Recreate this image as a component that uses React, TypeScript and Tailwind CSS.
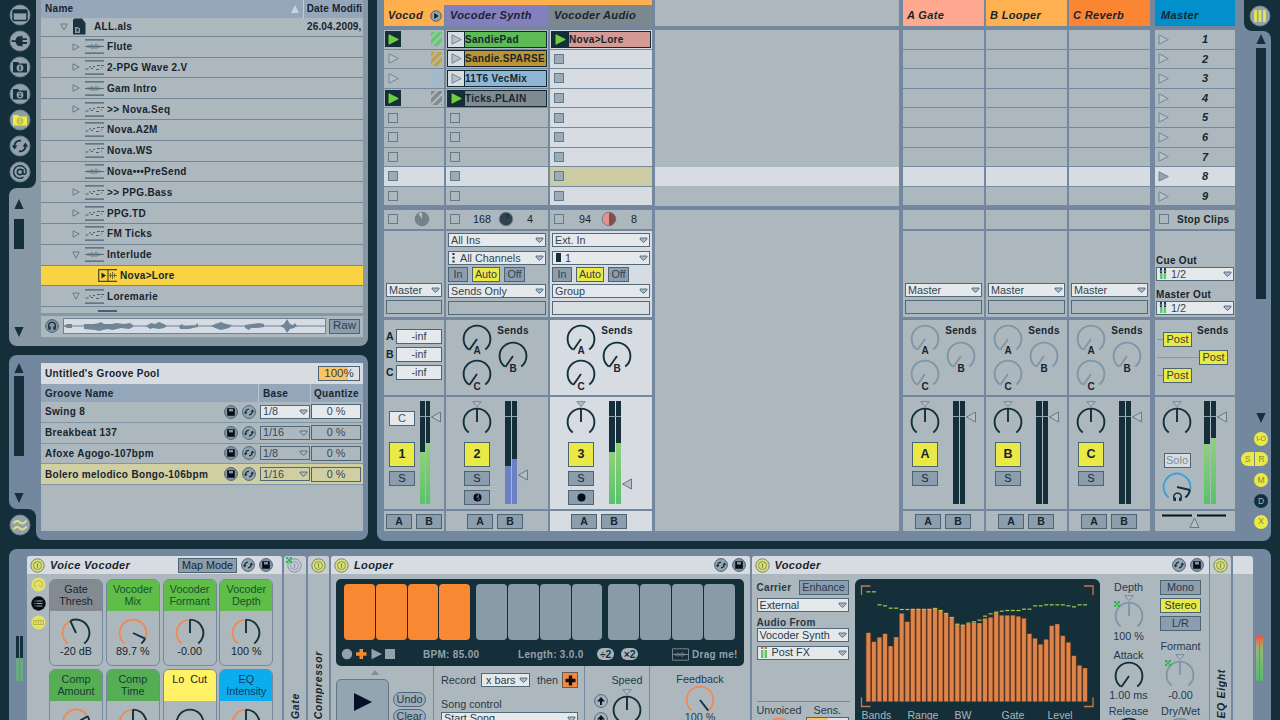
import React from "react";

type Kids = { children?: React.ReactNode; className?: string };

const INK = "#14303c";

/* ---------- shared drawing helpers ---------- */

function polar(c: number, r: number, deg: number) {
  const a = ((deg - 90) * Math.PI) / 180;
  return [c + r * Math.cos(a), c + r * Math.sin(a)];
}

function arcPath(c: number, r: number, from: number, to: number) {
  const [x0, y0] = polar(c, r, from);
  const [x1, y1] = polar(c, r, to);
  return `M${x0} ${y0}A${r} ${r} 0 ${to - from > 180 ? 1 : 0} 1 ${x1} ${y1}`;
}

function Knob({
  angle = -145,
  color = INK,
  fill,
  size = 30,
  reach = 13.4,
  rest,
}: {
  angle?: number;
  color?: string;
  fill?: string;
  size?: number;
  reach?: number;
  rest?: string;
}) {
  const [px, py] = polar(15, reach, angle);
  return (
    <svg width={size} height={size} viewBox="0 0 30 30" className="block shrink-0" fill="none" strokeWidth="1.9">
      {fill ? (
        <>
          <path d={arcPath(15, 13.4, -142, angle)} stroke={fill} />
          <path d={arcPath(15, 13.4, angle, 142)} stroke={rest || color} />
        </>
      ) : (
        <path d={arcPath(15, 13.4, -142, 142)} stroke={color} />
      )}
      <path d={`M15 15L${px} ${py}`} stroke={color} />
    </svg>
  );
}

function Caret() {
  return (
    <svg width="9" height="6" viewBox="0 0 9 6" className="block shrink-0">
      <path d="M1 1h7v1.2L4.9 5.2h-.8L1 2.2z" fill="#a9b8c6" stroke="#4f6a7e" strokeWidth=".9" />
    </svg>
  );
}

function Select({ children, className = "", icon, plain }: Kids & { icon?: React.ReactNode; plain?: boolean }) {
  return (
    <div
      className={`flex h-[14px] shrink-0 items-center justify-between border border-[#52697a] pl-[2px] pr-[1px] text-[10.8px] leading-none whitespace-nowrap ${plain ? "" : "bg-[#e6e9ec]"} ${className}`}
    >
      <span className="flex items-center gap-[4px]">
        {icon}
        {children}
      </span>
      <Caret />
    </div>
  );
}

function Btn({ children, className = "" }: Kids) {
  return (
    <div
      className={`flex h-[15px] shrink-0 items-center justify-center border border-[#4d6475] leading-none whitespace-nowrap ${className}`}
    >
      {children}
    </div>
  );
}

function Tri({ dir, className = "" }: { dir: "up" | "down"; className?: string }) {
  return (
    <svg width="10" height="10" viewBox="0 0 10 10" className={`block shrink-0 ${className}`}>
      <path d={dir === "up" ? "M5 0L9.6 10H.4z" : "M.4 0h9.2L5 10z"} fill={INK} />
    </svg>
  );
}

function Disc() {
  return (
    <svg width="14" height="14" viewBox="0 0 14 14" className="block shrink-0">
      <circle cx="7" cy="7" r="6.4" fill="#8496a5" stroke="#4e6271" />
      <path d="M3.2 3.2h7l.6.6v7H3.2z" fill="#060d14" />
      <path d="M5 4h4v2.4H5z" fill="#8496a5" />
    </svg>
  );
}

function Swap() {
  return (
    <svg width="14" height="14" viewBox="0 0 14 14" className="block shrink-0">
      <circle cx="7" cy="7" r="6.4" fill="#94a5b2" stroke="#4e6271" />
      <path d="M3.6 8.2C3.6 5.6 5 4.4 7 4.2M10.4 5.8C10.4 8.4 9 9.6 7 9.8" fill="none" stroke={INK} strokeWidth="1.3" />
      <path d="M1.8 7.2h3.6L3.6 9.6zM8.600 6.8h3.6L10.400 4.400z" fill={INK} />
    </svg>
  );
}

function Power({ off }: { off?: boolean }) {
  return (
    <svg width="15" height="15" viewBox="0 0 15 15" className="block shrink-0">
      <circle cx="7.500" cy="7.500" r="6.700" fill={off ? "#c3ccd3" : "#d6de7e"} stroke={off ? "#8795a0" : "#78866a"} />
      <circle cx="7.500" cy="7.500" r="4" fill="none" stroke={off ? "#8e9ca8" : "#8c9646"} strokeWidth="1" />
      <path d="M7.500 5.200v4.600" stroke={off ? "#8e9ca8" : "#8c9646"} strokeWidth="1.300" />
    </svg>
  );
}

function GreenMark() {
  return (
    <svg width="6" height="6" viewBox="0 0 6 6" className="block">
      <path d="M0 0h2.300v2.300H0zM3.700 0H6v2.300H3.700zM0 3.700h2.300V6H0zM3.700 3.700H6V6H3.700zM2 2h2v2H2z" fill="#2fb452" />
    </svg>
  );
}

/* ---------- browser ---------- */

function RoundIcon({ kind }: { kind: string }) {
  const hot = kind === "f3";
  return (
    <svg width="22" height="22" viewBox="0 0 22 22" className="block">
      <circle cx="11" cy="11" r="10" fill={hot ? "#8da0a0" : "#93a1ab"} stroke="#6f8290" />
      {kind === "box" && (
        <g fill="none" stroke={INK}>
          <rect x="4" y="6" width="14" height="10.500" rx="1.500" strokeWidth="1.500" />
          <path d="M4 7.800h14" strokeWidth="3.200" />
        </g>
      )}
      {kind === "plug" && (
        <path d="M2.500 10.300h4C7 7.800 8.500 6.300 10 6.300h2.300V5.800h1.200v2.500H18v1.800h-4.500v2H18v1.800h-4.500v2.600h-1.200v-.6H10C8.500 15.900 7 14.200 6.500 11.900h-4z" fill={INK} />
      )}
      {kind[0] === "f" && (
        <>
          <path d="M4 6h5l1.200 1.500H18V16.500H4z" fill={hot ? "#f0ec3e" : INK} />
          <circle cx="11" cy="12" r="3.400" fill={hot ? "#b5bb55" : "#93a1ab"} />
          {kind === "f1" ? (
            <path d="M11 9.800v4.400" stroke={INK} strokeWidth="1.400" />
          ) : (
            <path d="M9.600 10.600c1.400-1 2.800 0 2.200 1L9.800 13.400h2.600" fill="none" stroke={hot ? "#e6e26a" : INK} />
          )}
        </>
      )}
      {kind === "sync" && (
        <>
          <path d="M5.600 12C4.800 8 8 5 12 5.800M16.400 10C17.200 14 14 17 10 16.200" fill="none" stroke={INK} strokeWidth="1.900" />
          <path d="M2.800 10.500h5.700L5.600 14.500zM13.500 11.500h5.700L16.400 7.500z" fill={INK} />
        </>
      )}
      {kind === "at" && (
        <g fill="none" stroke={INK} strokeWidth="1.400">
          <circle cx="11" cy="11" r="2.700" />
          <path d="M13.800 8v4.300c.5 1.900 3.400 1.200 3.400-1.600A6.300 6.300 0 1 0 14.500 16.200" />
        </g>
      )}
      {kind === "wave" && (
        <g fill="none" stroke="#dfe37c" strokeWidth="2">
          <path d="M4.500 9.500C7 5.500 9.500 7 11 8.500s4 2 6.500-2" />
          <path d="M4.500 15.500C7 11.500 9.500 13 11 14.500s4 2 6.500-2" />
        </g>
      )}
      {kind === "bars" && <path d="M6.500 5v12M11 5v12M15.500 5v12" stroke="#dde35e" strokeWidth="3" />}
    </svg>
  );
}

function TrackIcon({ audio }: { audio?: boolean }) {
  return (
    <svg width="19" height="15" viewBox="0 0 19 15" className="block shrink-0">
      <path d="M0 .9h19M0 14.100h19" stroke="#4a6070" strokeWidth="1.300" />
      {audio ? (
        <path d="M0 7.500h19M3 6.200v2.600M5 6v3M7 5v5M9 6v3.500M11 4.500v5.500M13 6v3M15 6.500v2" stroke="#566b7b" fill="none" />
      ) : (
        <path d="M.5 9h3M4 7h2M6 8.500h2M8 6.500h2M11 9.500h3M12 5.500h3M16 5.500h3M16 8h1" stroke="#4a6070" strokeWidth="1.200" fill="none" />
      )}
    </svg>
  );
}

function Fold({ open }: { open?: boolean }) {
  return (
    <svg width="8" height="8" viewBox="0 0 8 8" className="block shrink-0">
      <path d={open ? "M.8 1h6.400L4 7.200z" : "M1 .8v6.400L7.200 4z"} fill="none" stroke="#6a7b88" />
    </svg>
  );
}

const tree: { name: string; fold?: "open" | "shut"; audio?: boolean }[] = [
  { name: "Flute", fold: "shut", audio: true },
  { name: "2-PPG Wave 2.V", fold: "shut" },
  { name: "Gam Intro", fold: "shut", audio: true },
  { name: ">> Nova.Seq", fold: "shut" },
  { name: "Nova.A2M" },
  { name: "Nova.WS" },
  { name: "Nova•••PreSend", audio: true },
  { name: ">> PPG.Bass", fold: "shut" },
  { name: "PPG.TD", fold: "shut" },
  { name: "FM Ticks", fold: "shut" },
  { name: "Interlude", fold: "open", audio: true },
  { name: "Nova>Lore" },
  { name: "Loremarie", fold: "open" },
];

function Browser() {
  return (
    <div className="flex h-[346px] w-[368px] overflow-hidden rounded-br-lg bg-[#8798a4]">
      <div className="flex w-[36px] flex-col">
        <div className="flex h-[188px] flex-col items-center gap-[4.2px] rounded-br-lg bg-[#142f39] pt-[4px] pl-[4px]">
          {["box", "plug", "f1", "f2", "f3", "sync", "at"].map((k) => (
            <RoundIcon key={k} kind={k} />
          ))}
        </div>
        <div className="flex-1 bg-[#142f39] pl-[9px]">
          <div className="flex h-full flex-col items-start rounded-l-lg bg-[#8798a4] pt-[11px] pb-[9px] pl-[5px]">
            <Tri dir="up" />
            <div className="mt-[10px] h-[30px] w-[10px] bg-[#142f39]" />
            <Tri dir="down" className="mt-auto" />
          </div>
        </div>
      </div>
      <div className="ml-[5px] flex w-[322px] flex-col text-[10px] font-bold tracking-[0.3px]">
        <div className="flex h-[17.600px] shrink-0 items-center bg-[#94a7ba] pl-[4px]">
          <span className="w-[249px]">Name</span>
          <svg width="8" height="8" viewBox="0 0 8 8" className="mr-[4px] shrink-0">
            <path d="M4 0l4 8H0z" fill="#cbd3da" />
          </svg>
          <span className="flex h-full w-[61px] items-center border-l border-[#c3ccd4] pl-[3px] tracking-[0.150px] whitespace-nowrap">Date Modifi</span>
        </div>
        <div className="flex h-[295px] shrink-0 flex-col overflow-hidden bg-[#adb8be]">
          <div className="flex h-[19.200px] shrink-0 items-center border-b border-[#718799] pl-[19px]">
            <Fold open />
            <svg width="14" height="17" viewBox="0 0 14 17" className="ml-[4px] shrink-0">
              <path d="M1 2Q1 .5 3 .5H10L13.500 5V16.500H1z" fill="#1b3240" />
              <path d="M3 9h3l1 1h1v5H3z" fill="#8b9aa3" />
              <path d="M4.500 10.500h2v3h-2z" fill="#1b3240" />
            </svg>
            <span className="ml-[8px] w-[213px]">ALL.als</span>
            <span className="tracking-[0.150px] whitespace-nowrap">26.04.2009,</span>
          </div>
          {tree.map((r) =>
            r.name === "Nova>Lore" ? (
              <div key={r.name} className="flex h-[20.800px] shrink-0 items-center border-b border-[#718799] bg-[#f9d342] pl-[57px]">
                <svg width="19" height="13" viewBox="0 0 19 13" className="shrink-0">
                  <path d="M19 .7H.7v11.600H19M10 .7v11.600" fill="none" stroke="#4b4a20" strokeWidth="1.200" />
                  <path d="M3.500 3.500v6L8 6.500z" fill="#26261a" />
                  <path d="M10 6.500h9M12.500 4v5M14.500 3v7M16.500 4.500v4" stroke="#6d6a2c" />
                </svg>
                <span className="ml-[3px]">{r.name}</span>
              </div>
            ) : (
              <div key={r.name} className="flex h-[20.800px] shrink-0 items-center border-b border-[#718799] pl-[31px]">
                <span className="w-[13px]">{r.fold && <Fold open={r.fold === "open"} />}</span>
                <TrackIcon audio={r.audio} />
                <span className="ml-[3px] whitespace-pre">{r.name}</span>
              </div>
            ),
          )}
          <div className="ml-[57px] mt-[3px] h-[2px] w-[19px] shrink-0 bg-[#4a5f6e]" />
        </div>
        <div className="mt-[3px] flex h-[21px] shrink-0 items-center bg-[#adb8be] pl-[4px] font-normal">
          <svg width="14" height="14" viewBox="0 0 14 14" className="shrink-0">
            <circle cx="7" cy="7" r="6.400" fill="#8496a5" stroke="#4e6271" />
            <path d="M4.400 10.500C2 6 4.500 3.200 7 3.200S12 6 9.600 10.500" fill="none" stroke={INK} strokeWidth="1.300" />
            <path d="M3.600 7.500h2v3.300h-2zM8.400 7.500h2v3.300h-2z" fill={INK} />
          </svg>
          <div className="ml-[4px] h-[16px] w-[263px] border border-[#6d8294] bg-[#d6dce3]">
            <svg width="261" height="14" viewBox="0 0 261 14">
              <path d="M0 7H261" stroke="#6a8093" />
              <path
                d="M0 7l3-2h5v4H3zM20 5h10l5-1 2-1 3 2h8l4-1 8 1 6-1 3 2v2l-4 2-8-1-8 2-6-1-8 2-4-1-11-1zM82 7l5-3 4 1 4-2 5 2 3 2-3 2-5 1-6-1-3 1zM115 7l3-2 2 2h6l2-1 2 1 4-3v4l-5 1-4 1h-9zM147 7l4-2 6-2 5 2 6 1-3 3-8 2-6-2zM181 6l6-1 8-1 5 1v3l-7 1h-6l-2 2-4-2zM216 7l4-2 3-5 3 5 3 1 2-2 2 3-3 2-4 1-3 4-3-5z"
                fill="#6f8598"
              />
            </svg>
          </div>
          <Btn className="ml-[3px] w-[31px] bg-[#8b9cac] text-[11.500px] tracking-normal text-[#2b3f4c]">Raw</Btn>
        </div>
      </div>
    </div>
  );
}

const grooves = [
  ["Swing 8", "1/8"],
  ["Breakbeat 137", "1/16"],
  ["Afoxe Agogo-107bpm", "1/8"],
  ["Bolero melodico Bongo-106bpm", "1/16"],
];

function GroovePool() {
  return (
    <div className="mt-[9px] flex h-[185px] w-[368px]">
      <div className="flex w-[36px] flex-col bg-[#73889e]">
        <div className="bg-[#142f39] pl-[9px]">
          <div className="flex h-[154px] flex-col items-start rounded-l-lg bg-[#73889e] pt-[8px] pb-[6px] pl-[5px]">
            <Tri dir="up" />
            <div className="mt-[3px] h-[80px] w-[10px] bg-[#142f39]" />
            <Tri dir="down" className="mt-auto" />
          </div>
        </div>
        <div className="flex flex-1 items-center justify-center rounded-tr-lg bg-[#142f39] pl-[4px]">
          <RoundIcon kind="wave" />
        </div>
      </div>
      <div className="flex w-[332px] flex-col rounded-r-lg rounded-bl-lg bg-[#73889e] pt-[8px] pr-[5px] pb-[9px] pl-[5px]">
        <div className="flex flex-1 flex-col bg-[#adb8be] text-[10px] font-bold tracking-[0.330px]">
          <div className="flex h-[21px] shrink-0 items-center justify-between bg-[#d8dce1] pr-[3px] pl-[4px]">
            <span>Untitled's Groove Pool</span>
            <Btn className="h-[14px] w-[42px] bg-linear-to-r from-[#fbc462] from-72% to-[#dfe3e8] to-72% text-[11.500px] font-normal tracking-normal text-[#3c4043]">
              100%
            </Btn>
          </div>
          <div className="flex h-[18px] shrink-0 items-center bg-[#94a7ba]">
            <span className="w-[217px] pl-[4px]">Groove Name</span>
            <span className="flex h-full w-[52px] items-center border-l border-[#b6c2cc] pl-[4px]">Base</span>
            <span className="flex h-full items-center border-l border-[#b6c2cc] pl-[3px]">Quantize</span>
          </div>
          {grooves.map(([n, b], i) => (
            <div
              key={n}
              className={`flex h-[20.800px] shrink-0 items-center border-b border-[#8095a6] pl-[4px] ${i === 3 ? "bg-[#d0cfa4]" : ""}`}
            >
              <span className="w-[179px] whitespace-nowrap">{n}</span>
              <Disc />
              <span className="w-[4px]" />
              <Swap />
              <Select plain={i > 0} className="ml-[4px] w-[50px] font-normal tracking-normal text-[#354855]">
                {b}
              </Select>
              <Btn className={`ml-[1px] h-[14px] w-[50px] text-[10.800px] font-normal tracking-normal text-[#354855] ${i ? "" : "bg-[#e6e9ec]"}`}>0 %</Btn>
            </div>
          ))}
        </div>
      </div>
    </div>
  );
}

/* ---------- session view ---------- */

function Stop({ solid }: { solid?: boolean }) {
  return <div className={`h-[10px] w-[10px] shrink-0 border border-[#637a8c] ${solid ? "bg-[#9dabb7]" : ""}`} />;
}

function Play({ on, box, solid }: { on?: boolean; box?: boolean; solid?: boolean }) {
  return (
    <div className={`flex h-full w-[16px] shrink-0 items-center justify-center ${on ? "bg-[#142f39]" : box ? "bg-[#d7dde3]" : ""}`}>
      <svg width="11" height="11" viewBox="0 0 11 11">
        <path d="M1 .8v9.400L10.300 5.500z" fill={on ? "#6fce3e" : solid ? "#94a5b0" : "#b4bfc6"} stroke={on ? "#6fce3e" : "#71879a"} />
      </svg>
    </div>
  );
}

function Slots({ render, className = "" }: { render?: (i: number) => React.ReactNode; className?: string }) {
  return (
    <div className={`mt-[4px] flex h-[176.400px] shrink-0 flex-col ${className}`}>
      {Array.from({ length: 9 }, (_, i) => (
        <div key={i} className={`flex h-[19.600px] shrink-0 items-center border-b border-[#73899d] ${i === 7 ? "bg-[#d7dce2]" : ""}`}>
          {render ? render(i) : null}
        </div>
      ))}
    </div>
  );
}

function Clip({ name, color, on }: { name: string; color: string; on?: boolean }) {
  return (
    <div className={`ml-[1px] flex h-[17px] w-[100px] items-center overflow-hidden border border-[#142936] ${color}`}>
      <Play on={on} box />
      <span className="border-l border-[#142936] text-[10px] leading-[15px] font-bold tracking-[0.300px] whitespace-nowrap">{name}</span>
    </div>
  );
}

function Pie({ base, wedge, d }: { base: string; wedge: string; d: string }) {
  return (
    <svg width="16" height="16" viewBox="0 0 16 16" className="shrink-0">
      <circle cx="8" cy="8" r="6.800" fill={base} stroke="#6f7f89" />
      <path d={d} fill={wedge} />
    </svg>
  );
}

function Meter({ w, levels, color, fader }: { w: string; levels: [number, number]; color: string; fader: number }) {
  return (
    <div className="flex h-[103px]">
      <div className="relative flex gap-[1px]">
        {levels.map((l, i) => (
          <div key={i} className={`flex h-[103px] flex-col justify-end bg-[#142f39] ${w}`}>
            <div className={color} style={{ height: l }} />
          </div>
        ))}
        <div className="absolute top-[15px] h-[1px] w-full bg-[#8da0ae]" />
      </div>
      <svg width="12" height="12" viewBox="0 0 12 12" className="block" style={{ marginTop: fader - 6 }}>
        <path d="M1.500 6L10.500 1v10z" fill="#b4bfc7" stroke="#66788a" />
      </svg>
    </div>
  );
}

function Pan() {
  return (
    <div className="flex h-[37px] shrink-0 flex-col items-center">
      <svg width="10" height="6" viewBox="0 0 10 6" className="block shrink-0">
        <path d="M.8.700h8.400L5 5.600z" fill="#b4bfc7" stroke="#71879a" />
      </svg>
      <Knob angle={0} />
    </div>
  );
}

function LabelledKnob({ label, color, className = "" }: { label: string; color: string; className?: string }) {
  return (
    <div className={`relative h-[30px] w-[30px] ${className}`}>
      <Knob color={color} />
      <span className="absolute inset-x-0 top-[22.500px] text-center text-[10px] leading-[10px] font-bold">{label}</span>
    </div>
  );
}

function SendsBlock({ color, pad }: { color: string; pad: string }) {
  return (
    <div className={`flex gap-[4px] pt-[4px] ${pad}`}>
      <div className="flex flex-col gap-[5.500px]">
        <LabelledKnob label="A" color={color} />
        <LabelledKnob label="C" color={color} />
      </div>
      <div className="flex w-[34px] flex-col items-center">
        <span className="mt-[2px] text-[10px] leading-[10px] font-bold tracking-[0.300px]">Sends</span>
        <LabelledKnob label="B" color={color} className="mt-[5.500px]" />
      </div>
    </div>
  );
}

function Pair({ className = "" }: { className?: string }) {
  return (
    <div className={`flex gap-[4px] pt-[3px] text-[10.500px] font-bold ${className}`}>
      <Btn className="w-[26px] bg-[#8c9dae]">A</Btn>
      <Btn className="w-[26px] bg-[#8c9dae]">B</Btn>
    </div>
  );
}

function Strip({
  w,
  bg = "bg-[#adb8be]",
  head,
  slots,
  status,
  io,
  sends,
  mix,
  foot,
}: {
  w: string;
  bg?: string;
  head: React.ReactNode;
  slots: React.ReactNode;
  status?: React.ReactNode;
  io?: React.ReactNode;
  sends?: React.ReactNode;
  mix?: React.ReactNode;
  foot?: React.ReactNode;
}) {
  return (
    <div className={`flex shrink-0 flex-col ${w}`}>
      {head}
      {slots}
      <div className="mt-[3.600px] flex h-[19px] shrink-0 items-center bg-[#adb8be]">{status}</div>
      <div className={`mt-[2px] h-[86px] shrink-0 ${bg}`}>{io}</div>
      <div className={`mt-[3px] h-[75px] shrink-0 ${bg}`}>{sends}</div>
      <div className={`mt-[2px] h-[112px] shrink-0 ${bg}`}>{mix}</div>
      <div className={`mt-[2px] h-[20px] shrink-0 ${bg}`}>{foot}</div>
    </div>
  );
}

const headText = "flex items-center text-[11px] font-bold italic tracking-[0.350px] whitespace-nowrap";

function TrackMix({ n, levels, color, fader, midi }: { n: string; levels: [number, number]; color: string; fader: number; midi?: boolean }) {
  return (
    <div className="flex pt-[4px]">
      <div className="ml-[15px] flex w-[32px] flex-col items-center">
        <Pan />
        <Btn className="mt-[4px] h-[25px] w-[26px] bg-[#eae945] text-[12.500px] font-bold">{n}</Btn>
        <Btn className="mt-[4px] w-[26px] bg-[#8c9dae] text-[11px]">S</Btn>
        <Btn className="mt-[4px] w-[26px] bg-[#8c9dae]">
          <svg width="9" height="9" viewBox="0 0 9 9">
            <circle cx="4.500" cy="4.500" r="4" fill="#060d18" />
            {midi && <path d="M5.200 1.200v3H3.600M6.500 5.200L4.600 7.200" stroke="#8c9dae" fill="none" />}
          </svg>
        </Btn>
      </div>
      <div className="ml-[12px]">
        <Meter w="w-[5.500px]" levels={levels} color={color} fader={fader} />
      </div>
    </div>
  );
}

function TrackIO({ a, b, icon, out, light }: { a: string; b: string; icon: React.ReactNode; out: string; light?: boolean }) {
  return (
    <div className="flex flex-col px-[2px] pt-[2px] text-[#31444f]">
      <Select>{a}</Select>
      <Select className="mt-[4px]" icon={icon}>
        {b}
      </Select>
      <div className="mt-[2px] flex gap-[4px] text-[10.800px]">
        <Btn className="h-[14px] w-[20px] bg-[#8c9dae]">In</Btn>
        <Btn className="h-[14px] w-[28px] bg-[#eae945]">Auto</Btn>
        <Btn className="h-[14px] w-[21px] bg-[#8c9dae]">Off</Btn>
      </div>
      <Select className="mt-[2px]">{out}</Select>
      <div className={`mt-[3px] h-[14px] border border-[#52697a] ${light ? "bg-[#d9dee3]" : ""}`} />
    </div>
  );
}

function Return({ name, letter, color, last }: { name: string; letter: string; color: string; last?: boolean }) {
  return (
    <Strip
      w={last ? "w-[81px] mr-[5px]" : "w-[81px] mr-[2px]"}
      head={<div className={`h-[26px] shrink-0 pt-[5px] pl-[4px] ${headText} ${color}`}>{name}</div>}
      slots={<Slots className="bg-[#adb8be]" />}
      io={
        <div className="px-[2px] pt-[52px] text-[#31444f]">
          <Select>Master</Select>
          <div className="mt-[3px] h-[14px] border border-[#52697a]" />
        </div>
      }
      sends={<SendsBlock color="#8095a8" pad="pl-[7px]" />}
      mix={
        <div className="flex pt-[4px]">
          <div className="ml-[6px] flex w-[32px] flex-col items-center">
            <Pan />
            <Btn className="mt-[4px] h-[25px] w-[26px] bg-[#eae945] text-[12.500px] font-bold">{letter}</Btn>
            <Btn className="mt-[4px] w-[26px] bg-[#8c9dae] text-[11px]">S</Btn>
          </div>
          <div className="ml-[12px]">
            <Meter w="w-[5.500px]" levels={[0, 0]} color="" fader={16} />
          </div>
        </div>
      }
      foot={<Pair className="pl-[12px]" />}
    />
  );
}

function MiniMeter() {
  return (
    <svg width="8" height="11" viewBox="0 0 8 11" className="shrink-0">
      <path d="M1 0h2v5H1zM5 0h2v5H5z" fill="#22394a" />
      <path d="M1 5h2.500v6H1zM4.600 5h2.500v6H4.600z" fill="#62c56c" />
      <path d="M0 3h8" stroke="#9fb0ba" strokeWidth=".8" />
    </svg>
  );
}

const stripes = [
  "bg-[repeating-linear-gradient(135deg,#67c873_0_3px,#adb8be_3px_5.600px)]",
  "bg-[repeating-linear-gradient(135deg,#c3a24b_0_3px,#adb8be_3px_5.600px)]",
  "bg-[repeating-linear-gradient(135deg,#93bcdb_0_3px,#adb8be_3px_5.600px)]",
  "bg-[repeating-linear-gradient(135deg,#828b8f_0_3px,#adb8be_3px_5.600px)]",
];

const synthClips = [
  ["SandiePad", "bg-[#5cbb55]"],
  ["Sandie.SPARSE", "bg-[#bd942f]"],
  ["11T6 VecMix", "bg-[#8fb6d5]"],
  ["Ticks.PLAIN", "bg-[#808b91]"],
];

function Session() {
  return (
    <div className="flex h-[541px] w-[858px] rounded-bl-lg bg-[#73889e] pl-[7px]">
      <Strip
        w="w-[60px]"
        head={
          <div className={`h-[26px] shrink-0 bg-[#ffaf4d] pt-[5px] pl-[4px] ${headText}`}>
            <span className="w-[42px]">Vocod</span>
            <svg width="12" height="12" viewBox="0 0 12 12">
              <circle cx="6" cy="6" r="5.300" fill="#94a1a8" stroke="#56636c" />
              <path d="M4.200 3v6L8.800 6z" fill="#10222c" />
            </svg>
          </div>
        }
        slots={
          <Slots
            className="bg-[#adb8be]"
            render={(i) =>
              i < 4 ? (
                <div className="flex h-[16px] w-full items-center pl-[1px]">
                  <Play on={i === 0 || i === 3} />
                  <div className={`ml-[30px] h-[14px] w-[11px] ${stripes[i]}`} />
                </div>
              ) : (
                <div className="pl-[4px]">
                  <Stop solid={i === 7} />
                </div>
              )
            }
          />
        }
        status={
          <div className="flex items-center gap-[16px] pl-[4px]">
            <Stop />
            <Pie base="#75828a" wedge="#b8c3c9" d="M8 8V1.500A6.500 6.500 0 0 0 4.500 2.500z" />
          </div>
        }
        io={
          <div className="px-[2px] pt-[52px] text-[#31444f]">
            <Select>Master</Select>
            <div className="mt-[3px] h-[14px] border border-[#52697a]" />
          </div>
        }
        sends={
          <div className="flex flex-col gap-[3px] pt-[9px] pl-[2px] text-[10.500px]">
            {["A", "B", "C"].map((l) => (
              <div key={l} className="flex items-center">
                <span className="w-[10px] leading-none font-bold">{l}</span>
                <Btn className="w-[46px] bg-[#e6e9ec] text-[10.800px] text-[#31444f]">-inf</Btn>
              </div>
            ))}
          </div>
        }
        mix={
          <div className="flex pt-[4px]">
            <div className="ml-[5px] flex w-[26px] flex-col">
              <Btn className="mt-[10px] w-[26px] bg-[#e6e9ec] text-[11px] text-[#45545f]">C</Btn>
              <Btn className="mt-[16px] h-[25px] w-[26px] bg-[#eae945] text-[12.500px] font-bold">1</Btn>
              <Btn className="mt-[4px] w-[26px] bg-[#8c9dae] text-[11px]">S</Btn>
            </div>
            <div className="ml-[5px]">
              <Meter w="w-[4.500px]" levels={[52, 61]} color="bg-linear-to-b from-[#8ed07c] to-[#58c26c]" fader={16} />
            </div>
          </div>
        }
        foot={<Pair className="pl-[2px]" />}
      />
      <div className="flex w-[208px] shrink-0 flex-col">
        <div className="h-[5px] shrink-0 bg-[#ffaf4d]" />
        <div className="flex">
          <Strip
            w="w-[102px] ml-[2px] mr-[2px]"
            head={<div className={`h-[21px] shrink-0 bg-[#857fc0] pl-[4px] ${headText}`}>Vocoder Synth</div>}
            slots={
              <Slots
                className="bg-[#adb8be]"
                render={(i) =>
                  i < 4 ? (
                    <Clip name={synthClips[i][0]} color={synthClips[i][1]} on={i === 3} />
                  ) : (
                    <div className="pl-[4px]">
                      <Stop solid={i === 7} />
                    </div>
                  )
                }
              />
            }
            status={
              <div className="flex items-center pl-[4px] text-[10.800px] leading-none">
                <Stop />
                <span className="ml-[13px] w-[25px]">168</span>
                <Pie base="#2e454f" wedge="#22363f" d="M8 8V2.500A5.500 5.500 0 0 1 12 4.500z" />
                <span className="ml-[13px]">4</span>
              </div>
            }
            io={
              <TrackIO
                a="All Ins"
                b="All Channels"
                out="Sends Only"
                icon={
                  <svg width="5" height="10" viewBox="0 0 5 10">
                    <path d="M2.500 0v2M2.500 3.800v2M2.500 7.600v2" stroke={INK} strokeWidth="2" />
                  </svg>
                }
              />
            }
            sends={<SendsBlock color={INK} pad="pl-[16px]" />}
            mix={<TrackMix n="2" levels={[38, 45]} color="bg-[#6c80c4]" fader={74} midi />}
            foot={<Pair className="pl-[21px]" />}
          />
          <Strip
            w="w-[102px]"
            bg="bg-[#d7dce2]"
            head={<div className={`h-[21px] shrink-0 bg-[#7d888e] pl-[4px] ${headText}`}>Vocoder Audio</div>}
            slots={
              <div className="mt-[4px] flex h-[176.400px] shrink-0 flex-col bg-[#d7dce2]">
                {Array.from({ length: 9 }, (_, i) => (
                  <div key={i} className={`flex h-[19.600px] shrink-0 items-center border-b border-[#73899d] ${i === 7 ? "bg-[#cccba4]" : ""}`}>
                    {i === 0 ? (
                      <Clip name="Nova>Lore" color="bg-[#d49a94]" on />
                    ) : (
                      <div className="pl-[4px]">
                        <Stop solid />
                      </div>
                    )}
                  </div>
                ))}
              </div>
            }
            status={
              <div className="flex items-center pl-[4px] text-[10.800px] leading-none">
                <Stop />
                <span className="ml-[15px] w-[22px]">94</span>
                <Pie base="#e2938a" wedge="#824f4d" d="M8 1.500A6.500 6.500 0 0 1 8 14.500z" />
                <span className="ml-[14px]">8</span>
              </div>
            }
            io={<TrackIO a="Ext. In" b="1" out="Group" light icon={<span className="ml-[1px] h-[9px] w-[5px] bg-[#142f39]" />} />}
            sends={<SendsBlock color={INK} pad="pl-[16px]" />}
            mix={<TrackMix n="3" levels={[52, 61]} color="bg-linear-to-b from-[#8ed07c] to-[#58c26c]" fader={83} />}
            foot={<Pair className="pl-[21px]" />}
          />
        </div>
      </div>
      <div className="mr-[4px] ml-[3px] flex w-[244px] shrink-0 flex-col">
        <div className="h-[26px] shrink-0 bg-[#adb8be]" />
        <div className="mt-[4px] h-[176px] shrink-0 bg-[#adb8be] pt-[137px]">
          <div className="h-[19px] bg-[#d7dce2]" />
        </div>
        <div className="mt-[4px] h-[321px] shrink-0 bg-[#adb8be]" />
      </div>
      <Return name="A Gate" letter="A" color="bg-[#ffaa90]" />
      <Return name="B Looper" letter="B" color="bg-[#ffb050]" />
      <Return name="C Reverb" letter="C" color="bg-[#fa8633]" last />
      <Strip
        w="w-[80px]"
        head={<div className={`h-[26px] shrink-0 bg-[#0290cc] pt-[5px] pl-[6px] ${headText}`}>Master</div>}
        slots={
          <Slots
            className="bg-[#adb8be]"
            render={(i) => (
              <>
                <Play solid={i === 7} />
                <span className="ml-[30px] w-[8px] text-center text-[11px] font-bold italic">{i + 1}</span>
              </>
            )}
          />
        }
        status={
          <div className="flex items-center gap-[8px] pl-[4px] text-[10px] font-bold tracking-[0.300px] whitespace-nowrap">
            <Stop />
            Stop Clips
          </div>
        }
        io={
          <div className="flex flex-col pt-[24px] pr-[1px] pl-[1px]">
            <span className="text-[10px] leading-[12px] font-bold tracking-[0.300px]">Cue Out</span>
            <Select icon={<MiniMeter />} className="text-[#31444f]">
              1/2
            </Select>
            <span className="mt-[8px] text-[10px] leading-[12px] font-bold tracking-[0.300px]">Master Out</span>
            <Select icon={<MiniMeter />} className="text-[#31444f]">
              1/2
            </Select>
          </div>
        }
        sends={
          <div className="flex pt-[12px] pl-[2px] text-[11px]">
            <div className="flex w-[35px] flex-col gap-[21px]">
              {[0, 1].map((k) => (
                <div key={k} className="flex items-center">
                  <span className="h-[1px] w-[6px] bg-[#8698a7]" />
                  <Btn className="w-[29px] bg-[#eae945] text-[#394130]">Post</Btn>
                </div>
              ))}
            </div>
            <div className="-mt-[7px] flex flex-col">
              <span className="ml-[5px] text-[10px] leading-[12px] font-bold tracking-[0.300px]">Sends</span>
              <div className="mt-[13px] -ml-[35px] flex items-center">
                <span className="h-[1px] w-[42px] bg-[#8698a7]" />
                <Btn className="w-[29px] bg-[#eae945] text-[#394130]">Post</Btn>
              </div>
            </div>
          </div>
        }
        mix={
          <div className="flex pt-[4px]">
            <div className="ml-[6px] flex w-[32px] flex-col items-center">
              <Pan />
              <Btn className="mt-[15px] w-[27px] bg-[#d7dce2] text-[11px] text-[#7d8c9b]">Solo</Btn>
              <div className="relative mt-[4px]">
                <Knob angle={103} fill="#3f9fdc" />
                <svg width="11" height="10" viewBox="0 0 11 10" className="absolute top-[20px] left-[10px]">
                  <path d="M3 9C0 4 2.500 1 5.500 1S11 4 8 9" fill="none" stroke={INK} strokeWidth="1.300" />
                  <path d="M1.500 5.500H4V9H1.500zM7 5.500h2.500V9H7z" fill={INK} />
                </svg>
              </div>
            </div>
            <div className="ml-[11px]">
              <Meter w="w-[5.500px]" levels={[60, 66]} color="bg-linear-to-b from-[#8ed07c] to-[#58c26c]" fader={16} />
            </div>
          </div>
        }
        foot={
          <svg width="80" height="20" viewBox="0 0 80 20" className="block">
            <path d="M7 4.500H37M42 4.500H71" stroke="#07131a" strokeWidth="1.800" />
            <path d="M39.500 7L44 16.500H35z" fill="#b4bfc7" stroke="#66788a" />
          </svg>
        }
      />
    </div>
  );
}

function Dot({ children, dark, className = "rounded-full w-[14px]" }: Kids & { dark?: boolean }) {
  return (
    <div
      className={`flex h-[14px] items-center justify-center text-[8.500px] leading-none ${dark ? "bg-[#142f39] text-[#a6b2bc]" : "bg-[#eae945] text-[#868a3a]"} ${className}`}
    >
      {children}
    </div>
  );
}

function SessionSide() {
  return (
    <div className="flex w-[45px] flex-col">
      <div className="h-[31px] bg-[#73889e] pl-[9px]">
        <div className="flex h-full items-center justify-center rounded-bl-lg bg-[#142f39] pr-[5px]">
          <RoundIcon kind="bars" />
        </div>
      </div>
      <div className="flex h-[510px] w-[36px] flex-col items-end rounded-r-lg bg-[#73889e] pt-[3px] pr-[5px]">
        <Tri dir="up" />
        <div className="mt-[4px] h-[251px] w-[10px] bg-[#142f39]" />
        <Tri dir="down" className="mt-[114px]" />
        <div className="-mr-[2px] mt-[8.500px] flex flex-col items-end gap-[6.800px]">
          <Dot>
            <span className="text-[7.500px] tracking-[-0.300px]">I-O</span>
          </Dot>
          <div className="flex gap-[1px]">
            <Dot className="w-[13px] rounded-l-full">S</Dot>
            <Dot className="w-[13px] rounded-r-full">R</Dot>
          </div>
          <Dot>M</Dot>
          <Dot dark>D</Dot>
          <Dot>X</Dot>
        </div>
      </div>
    </div>
  );
}

/* ---------- devices ---------- */

function Device({ title, w, right, end = "pr-[4px]", children }: Kids & { title: string; w: string; end?: string; right?: React.ReactNode }) {
  return (
    <div className={`flex h-[164px] shrink-0 flex-col overflow-hidden rounded-t-[3px] bg-[#adb8be] ${w}`}>
      <div className={`flex h-[18px] shrink-0 items-center bg-[#d7dce2] pl-[3px] ${end}`}>
        <Power />
        <span className="ml-[5px] flex-1 text-[11px] font-bold tracking-[0.350px] whitespace-nowrap italic">{title}</span>
        {right}
        <Swap />
        <span className="w-[4px]" />
        <Disc />
      </div>
      {children}
    </div>
  );
}

function Folded({ title, off, className }: { title: string; off?: boolean; className: string }) {
  return (
    <div className={`flex h-[164px] shrink-0 flex-col items-center rounded-t-[3px] bg-[#adb8be] ${className}`}>
      <div className="relative flex h-[18px] w-full shrink-0 items-center justify-center rounded-t-[3px] bg-[#c6ced4]">
        <Power off={off} />
        {off && (
          <span className="absolute top-[1px] left-[2px]">
            <GreenMark />
          </span>
        )}
      </div>
      <div className="mt-auto mb-[1px] rotate-180 text-[10.500px] leading-[12px] font-bold tracking-[0.650px] whitespace-nowrap italic [writing-mode:vertical-rl]">
        {title}
      </div>
    </div>
  );
}

const macros = [
  { a: "Gate", b: "Thresh", c: "bg-[#848b90]", ang: -25, v: "-20 dB" },
  { a: "Vocoder", b: "Mix", c: "bg-[#5fbd48] text-[#14522e]", ang: 115, v: "89.7 %" },
  { a: "Vocoder", b: "Formant", c: "bg-[#5fbd48] text-[#14522e]", ang: 0, v: "-0.00" },
  { a: "Vocoder", b: "Depth", c: "bg-[#5fbd48] text-[#14522e]", ang: 0, v: "100 %" },
  { a: "Comp", b: "Amount", c: "bg-[#56ae54] text-[#14402e]", ang: 60, v: "" },
  { a: "Comp", b: "Time", c: "bg-[#56ae54] text-[#14402e]", ang: 0, v: "" },
  { a: "Lo  Cut", b: "", c: "bg-[#fff264]", ang: -142, v: "" },
  { a: "EQ", b: "Intensity", c: "bg-[#0cadec] text-[#12375c]", ang: 0, v: "" },
];

function VoiceVocoder() {
  return (
    <Device
      title="Voice Vocoder"
      w="w-[255px]"
      end="pr-[9px]"
      right={<Btn className="mr-[4px] h-[14px] w-[59px] bg-[#8c9dae] text-[10.800px]">Map Mode</Btn>}
    >
      <div className="flex">
        <div className="flex w-[22px] shrink-0 flex-col items-center gap-[4px] pt-[3px]">
          <svg width="15" height="15" viewBox="0 0 15 15">
            <circle cx="7.500" cy="7.500" r="7" fill="#e3e267" />
            <path d="M4.800 10.500a4 4 0 1 1 5.400 0M7.500 7.500l2.500 2.500" fill="none" stroke="#b5b552" />
          </svg>
          <svg width="15" height="15" viewBox="0 0 15 15">
            <circle cx="7.500" cy="7.500" r="7.200" fill="#060d14" />
            <path d="M3.500 5h1M5.500 5h6M3.500 7.500h1M5.500 7.500h6M3.500 10h1M5.500 10h6" stroke="#9daab3" />
          </svg>
          <svg width="15" height="15" viewBox="0 0 15 15">
            <circle cx="7.500" cy="7.500" r="7" fill="#e3e267" />
            <path d="M2.500 5.500h10v4h-10zM5 5.500v3M7.500 5.500v3M10 5.500v3" fill="none" stroke="#b5b552" />
          </svg>
        </div>
        <div className="grid grid-cols-[repeat(4,54px)] gap-x-[2.800px] gap-y-[3px] pt-[5px]">
          {macros.map((m, i) => (
            <div key={i} className="flex h-[87px] flex-col items-center overflow-hidden rounded-[6px] border border-[#73899d] text-[10.800px]">
              <div className={`flex h-[31px] w-full shrink-0 flex-col items-center pt-[3px] leading-[12px] whitespace-pre ${m.c}`}>
                <span>{m.a}</span>
                <span>{m.b}</span>
              </div>
              <div className="mt-[7px]">
                <Knob angle={m.ang} fill={i === 6 ? undefined : "#f08a54"} />
              </div>
              <span className="-mt-[3px] leading-[12px]">{m.v}</span>
            </div>
          ))}
        </div>
      </div>
    </Device>
  );
}

function Looper() {
  return (
    <Device title="Looper" w="w-[419px] ml-[2.500px]">
      <div className="mt-[5px] ml-[5px] flex h-[87px] w-[408px] shrink-0 flex-col rounded-[5px] bg-[#142f39] pt-[5px] pl-[8px]">
        <div className="flex gap-[6px]">
          {[0, 1, 2].map((g) => (
            <div key={g} className="flex gap-[1px]">
              {[0, 1, 2, 3].map((p) => (
                <div key={p} className={`h-[56px] w-[30.800px] rounded-[4px] ${g === 0 ? "bg-[#f98833]" : "bg-[#899ba6]"}`} />
              ))}
            </div>
          ))}
        </div>
        <div className="-ml-[3px] mt-[7px] flex h-[14px] items-center text-[10px] font-bold tracking-[0.300px] whitespace-nowrap text-[#93a1ab]">
          <svg width="56" height="12" viewBox="0 0 56 12" className="shrink-0" fill="#93a1ab">
            <circle cx="6" cy="6" r="5.200" />
            <path d="M18.500 1h3.500v3.300h3.500v3.500H22V11h-3.500V7.800H15V4.300h3.500z" fill="#f98833" />
            <path d="M30.500 .8v10.400L41 6zM44 1h10v10H44z" />
          </svg>
          <span className="ml-[26px] w-[95px]">BPM: 85.00</span>
          <span className="w-[79px]">Length: 3.0.0</span>
          {["÷2", "×2"].map((t) => (
            <span key={t} className="mr-[7px] flex h-[12px] w-[17px] items-center justify-center rounded-full bg-[#a9b5be] text-[10.500px] leading-none tracking-tight text-[#142f39]">
              {t}
            </span>
          ))}
          <svg width="17" height="13" viewBox="0 0 17 13" className="ml-[27px] shrink-0">
            <path d="M.5 .8h16v11.400H.5z" fill="none" stroke="#76868f" />
            <path d="M1 6.500h15M4 5v3M6 4.500v4M8 5v3M10 4v5M12 5v3" stroke="#76868f" />
          </svg>
          <span className="ml-[3px]">Drag me!</span>
        </div>
      </div>
      <div className="flex h-[54px] pl-[5px] text-[10.800px] text-[#26394a]">
        <div className="flex w-[98px] shrink-0 border-r border-[#73899d]">
          <div className="w-[53px] pt-[4px]">
            <svg width="8" height="5" viewBox="0 0 8 5" className="ml-[35px] block">
              <path d="M4 0l4 5H0z" fill="#7d8e9b" />
            </svg>
            <div className="mt-[4px] flex h-[56px] justify-center rounded-[5px] border border-[#61788b] bg-[#94a5b2] pt-[13px]">
              <svg width="18" height="18" viewBox="0 0 18 18">
                <path d="M0 0v18L18 9z" fill="#061026" />
              </svg>
            </div>
          </div>
          <div className="ml-[4px] flex flex-col gap-[2px] pt-[26px]">
            <Btn className="h-[14px] w-[33px] rounded-full bg-[#9dacb8]">Undo</Btn>
            <Btn className="h-[14px] w-[33px] rounded-full bg-[#9dacb8]">Clear</Btn>
          </div>
        </div>
        <div className="flex w-[151px] shrink-0 flex-col border-r border-[#73899d] pt-[6px] pl-[7px]">
          <div className="flex items-center">
            <span className="w-[40px]">Record</span>
            <Select className="w-[49px]">
              <span className="pl-[2px]">x bars</span>
            </Select>
            <span className="ml-[7px] w-[25px]">then</span>
            <div className="flex h-[16px] w-[16px] items-center justify-center border border-[#6d5a48] bg-[#f08a44]">
              <svg width="11" height="11" viewBox="0 0 11 11">
                <path d="M3.800 .5h3.400v3.300h3.300v3.400H7.200v3.300H3.800V7.200H.5V3.800h3.300z" fill="#130c08" />
              </svg>
            </div>
          </div>
          <span className="mt-[10px] leading-[13px]">Song control</span>
          <Select className="mt-[0.500px] w-[137px]">Start Song</Select>
        </div>
        <div className="flex w-[65px] shrink-0 border-r border-[#73899d]">
          <div className="ml-[9px] flex w-[14px] shrink-0 flex-col gap-[4px] pt-[28px]">
            {[0, 1].map((i) => (
              <svg key={i} width="14" height="14" viewBox="0 0 14 14" className="shrink-0">
                <circle cx="7" cy="7" r="6.400" fill="#a5b3bd" stroke="#52697a" />
                <path d="M7 3L11 7.500H3zM6 7h2v4H6z" fill="#0a1622" />
              </svg>
            ))}
          </div>
          <div className="flex w-[38px] flex-col items-center pt-[7.500px]">
            <span className="leading-[13px]">Speed</span>
            <div className="mt-[2px]">
              <Pan />
            </div>
          </div>
        </div>
        <div className="flex w-[101px] flex-col items-center pt-[7px]">
          <span className="leading-[13px]">Feedback</span>
          <div className="-mt-[1px]">
            <Knob angle={142} fill="#f08a54" />
          </div>
          <span className="-mt-[4px] leading-[12px]">100 %</span>
        </div>
      </div>
    </Device>
  );
}

const bars = [262, 289, 276, 265, 302, 275, 204, 229, 190, 190, 190, 190, 187, 195, 204, 216, 236, 239, 235, 231, 233, 219, 216, 201, 210, 210, 210, 213, 219, 265, 279, 297, 282, 241, 236, 271, 291, 331, 360, 368];
const marks = [139, 139, 178, 181, 188, 188, 192, 192, 192, 192, 192, 192, 190, 195, 204, 216, 236, 239, 233, 229, 224, 212, 205, 200, 197, 195, 195, 195, 191, 191, 181, 181, 178, 178, 178, 178, 181, 184, 178, 178];

function Ring({ label, value, angle, color, cap, mark, className = "" }: { label: string; value?: string; angle: number; color: string; cap?: boolean; mark?: boolean; className?: string }) {
  return (
    <div className={`flex shrink-0 flex-col items-center ${className}`}>
      <span className="leading-[12px] whitespace-nowrap">{label}</span>
      <div className={`relative flex flex-col items-center ${cap ? "mt-[2px]" : ""}`}>
        {cap && (
          <svg width="10" height="6" viewBox="0 0 10 6" className="block shrink-0">
            <path d="M.8.700h8.400L5 5.600z" fill="#b4bfc7" stroke="#71879a" />
          </svg>
        )}
        <Knob angle={angle} color={color} />
        {mark && (
          <span className="absolute top-[6px] left-0">
            <GreenMark />
          </span>
        )}
      </div>
      <span className={`leading-[12px] whitespace-nowrap ${cap ? "-mt-[1px]" : "-mt-[2px]"}`}>{value}</span>
    </div>
  );
}

function Vocoder() {
  return (
    <Device title="Vocoder" w="w-[457px] ml-[1.500px]" end="pr-[5px]">
      <div className="flex h-[146px] text-[10.800px] text-[#26394a]">
        <div className="ml-[5px] flex w-[93px] shrink-0 flex-col pt-[6px]">
          <div className="flex items-center justify-between">
            <span className="text-[10px] font-bold tracking-[0.300px]">Carrier</span>
            <Btn className="mr-[1px] h-[14px] w-[50px] bg-[#8c9dae]">Enhance</Btn>
          </div>
          <Select className="mt-[3px] w-[92px]">External</Select>
          <span className="mt-[4px] text-[10px] leading-[13px] font-bold tracking-[0.300px]">Audio From</span>
          <Select className="-mt-[1px] w-[92px]">Vocoder Synth</Select>
          <Select
            className="mt-[3.500px] w-[92px]"
            icon={
              <svg width="8" height="11" viewBox="0 0 8 11">
                <path d="M1 3h2.400v8H1zM4.600 3H7v8H4.600z" fill="#62c56c" />
                <path d="M1 0h2.400v2H1zM4.600 0H7v2H4.600z" fill="#d46b5b" />
              </svg>
            }
          >
            Post FX
          </Select>
          <div className="mt-[41px] h-[1px] shrink-0 bg-[#73899d]" />
          <div className="mt-[2px] flex gap-[12px] leading-[13px]">
            <span>Unvoiced</span>
            <span>Sens.</span>
          </div>
          <div className="flex">
            <div className="ml-[7px]">
              <Knob angle={142} fill="#f08a54" />
            </div>
            <div className="ml-[12px] h-[14px] w-[43px] shrink-0 border border-[#4d6475] bg-linear-to-r from-[#fbc462] from-50% to-[#dfe3e8] to-50%" />
          </div>
        </div>
        <div className="mt-[4.500px] ml-[5px] flex h-[160px] w-[245px] shrink-0 flex-col rounded-[6px] bg-[#142f39]">
          <svg width="245" height="130" viewBox="855 578.500 245 130" className="block shrink-0">
            {bars.map((b, i) => {
              const x = 866.400 + i * 5.556;
              return (
                <React.Fragment key={i}>
                  <rect x={x - 0.700} y={545 + b / 3} width="5.400" height={156 - b / 3} fill="#6e3c1d" />
                  <rect x={x} y={545 + b / 3} width="3.900" height={156 - b / 3} fill="#dd844c" />
                  <rect x={x} y={544.400 + marks[i] / 3} width="4" height="1.200" fill="#a3cd4c" />
                </React.Fragment>
              );
            })}
            <path d="M861.500 594.500v-9h9M1084 585.500h9v9M861.500 697v9h9M1084 706h9v-9" fill="none" stroke="#c9784a" strokeWidth="1.300" />
          </svg>
          <div className="flex pl-[7px] text-[10.500px] leading-[12px] text-[#a9b6bf]">
            <span className="w-[46px]">Bands</span>
            <span className="w-[47px]">Range</span>
            <span className="w-[47px]">BW</span>
            <span className="w-[46px]">Gate</span>
            <span>Level</span>
          </div>
        </div>
        <div className="ml-[7px] flex w-[44px] shrink-0 flex-col items-center pt-[7px]">
          <Ring label="Depth" value="100 %" angle={0} color="#8095a8" cap mark />
          <Ring label="Attack" value="1.00 ms" angle={-145} color={INK} className="mt-[7px]" />
          <Ring label="Release" angle={-120} color={INK} className="mt-[4px]" />
        </div>
        <div className="ml-[9px] flex w-[42px] shrink-0 flex-col items-center pt-[5.500px]">
          <Btn className="h-[14.500px] w-[41px] bg-[#8c9dae]">Mono</Btn>
          <Btn className="mt-[3px] h-[14.500px] w-[41px] bg-[#eae945]">Stereo</Btn>
          <Btn className="mt-[3px] h-[14.500px] w-[41px] bg-[#8c9dae]">L/R</Btn>
          <Ring label="Formant" value="-0.00" angle={0} color="#8095a8" cap mark className="mt-[9.500px]" />
          <Ring label="Dry/Wet" angle={0} color="#8095a8" mark className="mt-[4px]" />
        </div>
      </div>
    </Device>
  );
}

function SideMeter({ hot }: { hot?: boolean }) {
  return (
    <div className="flex w-[18px] shrink-0 gap-[1px] pt-[87px]">
      {[0, 1].map((i) => (
        <div
          key={i}
          className={`h-[45px] w-[3px] ${i === 0 ? (hot ? "ml-[3px]" : "ml-[7px]") : ""} ${
            hot
              ? "bg-linear-to-b from-[#e8543c] via-[#8fb878] via-30% to-[#58b76c]"
              : "bg-linear-to-b from-[#142f39] from-50% to-[#6aab85] to-50%"
          }`}
        />
      ))}
    </div>
  );
}

export default function App() {
  return (
    <div className="h-[720px] w-[1280px] overflow-hidden bg-[#142f39] font-['Liberation_Sans',Arial,sans-serif] text-[#16252f]">
      <div className="flex h-[541px]">
        <div className="flex w-[377px] shrink-0 flex-col">
          <Browser />
          <GroovePool />
        </div>
        <Session />
        <SessionSide />
      </div>
      <div className="mt-[8px] ml-[9px] flex h-[171px] w-[1262px] rounded-t-lg bg-[#73889e]">
        <SideMeter />
        <div className="flex w-[1226px] shrink-0 pt-[7px]">
          <VoiceVocoder />
          <Folded title="Gate" off className="ml-[2px] w-[21.500px]" />
          <Folded title="Compressor" className="ml-[2px] w-[21px]" />
          <Looper />
          <Vocoder />
          <Folded title="EQ Eight" className="ml-[1.500px] w-[21px]" />
          <div className="ml-[2px] h-[164px] flex-1 rounded-t-[3px] bg-[#adb8be]">
            <div className="h-[18px] rounded-tr-[4px] bg-[#d7dce2]" />
          </div>
        </div>
        <SideMeter hot />
      </div>
    </div>
  );
}
